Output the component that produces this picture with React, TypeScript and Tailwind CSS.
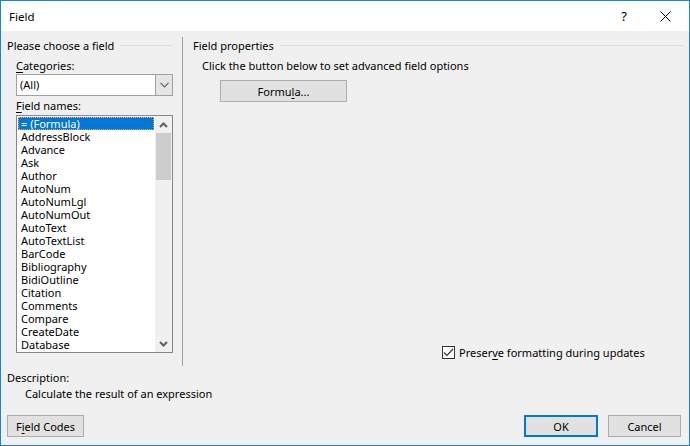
import React from "react";

const items = [
  "= (Formula)",
  "AddressBlock",
  "Advance",
  "Ask",
  "Author",
  "AutoNum",
  "AutoNumLgl",
  "AutoNumOut",
  "AutoText",
  "AutoTextList",
  "BarCode",
  "Bibliography",
  "BidiOutline",
  "Citation",
  "Comments",
  "Compare",
  "CreateDate",
  "Database",
];

function ChevronDown() {
  return (
    <svg width="9" height="6" viewBox="0 0 9 6">
      <path d="M0.5 0.8 L4.5 4.8 L8.5 0.8" fill="none" stroke="#606060" strokeWidth="1.2" />
    </svg>
  );
}

function ArrowUp() {
  return (
    <svg width="9" height="6" viewBox="0 0 9 6">
      <path d="M1 5 L4.5 1.5 L8 5" fill="none" stroke="#606060" strokeWidth="2" />
    </svg>
  );
}

function ArrowDown() {
  return (
    <svg width="9" height="6" viewBox="0 0 9 6">
      <path d="M1 1 L4.5 4.5 L8 1" fill="none" stroke="#606060" strokeWidth="2" />
    </svg>
  );
}

export default function App() {
  return (
    <div
      className="w-[690px] h-[446px] border border-[#1883d7] flex flex-col bg-[#f0f0f0] text-[11px] text-black overflow-hidden"
      style={{ fontFamily: '"Noto Sans", "Segoe UI", sans-serif' }}
    >
      {/* Title bar */}
      <div className="h-[30px] bg-white flex items-center shrink-0">
        <span className="ml-[8px] leading-[15px] text-[11.5px]">Field</span>
        <div className="flex-1" />
        <span className="text-[13px] mr-[33px] leading-[15px]">?</span>
        <svg width="11" height="11" viewBox="0 0 11 11" className="mr-[18px]">
          <path d="M0.5 0.5 L10.5 10.5 M10.5 0.5 L0.5 10.5" stroke="#000" strokeWidth="1" />
        </svg>
      </div>

      {/* Body */}
      <div className="flex-1 flex flex-col">
        <div className="flex h-[335px]">
          {/* Left column */}
          <div className="w-[181px] shrink-0 flex flex-col pl-[6px] pt-[7px]">
            <div className="flex items-center h-[15px] leading-[15px] pr-[10px]">
              <span>Please choose a field</span>
              <div className="flex-1 h-px bg-[#dcdcdc] ml-[6px]" />
            </div>
            <div className="ml-[9px] mt-[5px] h-[15px] leading-[15px]">
              <span className="underline underline-offset-2">C</span>ategories:
            </div>
            <div className="ml-[9px] mt-[1px] w-[157px] h-[22px] bg-white border border-[#a0a0a0] flex items-center">
              <span className="ml-[3px] flex-1">(All)</span>
              <div className="w-[17px] h-full bg-[#e5e5e5] border-l border-[#a0a0a0] flex items-center justify-center">
                <ChevronDown />
              </div>
            </div>
            <div className="ml-[9px] mt-[2px] h-[15px] leading-[15px]">
              <span className="underline underline-offset-2">F</span>ield names:
            </div>
            <div className="ml-[9px] mt-[2px] w-[157px] h-[238px] bg-white border border-[#828790] flex">
              <div className="flex-1 pt-[1px] pl-[1px]">
                {items.map((it, i) =>
                  i === 0 ? (
                    <div
                      key={it}
                      className="h-[13px] leading-[11px] bg-[#0078d7] text-white pl-[2px] border border-dotted border-[#f5a35c] mr-[1px]"
                    >
                      {it}
                    </div>
                  ) : (
                    <div key={it} className="h-[13px] leading-[13px] pl-[3px] whitespace-nowrap">
                      {it}
                    </div>
                  )
                )}
              </div>
              <div className="w-[17px] bg-[#f0f0f0] flex flex-col">
                <div className="h-[17px] flex items-center justify-center">
                  <ArrowUp />
                </div>
                <div className="h-[47px] bg-[#cdcdcd] mx-[1px]" />
                <div className="flex-1" />
                <div className="h-[17px] flex items-center justify-center">
                  <ArrowDown />
                </div>
              </div>
            </div>
          </div>

          {/* Separator */}
          <div className="w-px bg-[#a0a0a0] mt-[6px] shrink-0" />

          {/* Right column */}
          <div className="flex-1 flex flex-col pl-[10px] pt-[7px] pr-[6px]">
            <div className="flex items-center h-[15px] leading-[15px]">
              <span>Field properties</span>
              <div className="flex-1 h-px bg-[#dcdcdc] ml-[6px]" />
            </div>
            <div className="ml-[9px] mt-[5px] h-[15px] leading-[15px]">
              Click the button below to set advanced field options
            </div>
            <button className="ml-[27px] mt-[7px] w-[127px] h-[22px] bg-[#e1e1e1] border border-[#adadad] flex items-center justify-center leading-[15px]">
              Formu<span className="underline underline-offset-2">l</span>a...
            </button>
            <div className="flex-1" />
            <div className="flex items-center ml-[249px] mb-[6px] h-[15px]">
              <div className="w-[13px] h-[13px] border border-[#333] bg-white flex items-center justify-center">
                <svg width="11" height="9" viewBox="0 0 11 9">
                  <path d="M1 4.5 L4 7.5 L10 1" fill="none" stroke="#333" strokeWidth="1.2" />
                </svg>
              </div>
              <span className="ml-[4px] leading-[15px]">
                Preser<span className="underline underline-offset-2">v</span>e formatting during updates
              </span>
            </div>
          </div>
        </div>

        {/* Description */}
        <div className="pl-[6px] mt-[4px] h-[15px] leading-[15px]">Description:</div>
        <div className="pl-[24px] mt-[1px] h-[15px] leading-[15px]">Calculate the result of an expression</div>

        {/* Buttons */}
        <div className="flex items-center mt-[14px] px-[6px]">
          <button className="w-[77px] h-[22px] bg-[#e1e1e1] border border-[#adadad] flex items-center justify-center leading-[15px]">
            F<span className="underline underline-offset-2">i</span>eld Codes
          </button>
          <div className="flex-1" />
          <button className="w-[74px] h-[22px] bg-[#e1e1e1] border-2 border-[#0078d7] flex items-center justify-center leading-[15px]">
            OK
          </button>
          <button className="w-[73px] h-[22px] ml-[10px] mr-[2px] bg-[#e1e1e1] border border-[#adadad] flex items-center justify-center leading-[15px]">
            Cancel
          </button>
        </div>
      </div>
    </div>
  );
}
